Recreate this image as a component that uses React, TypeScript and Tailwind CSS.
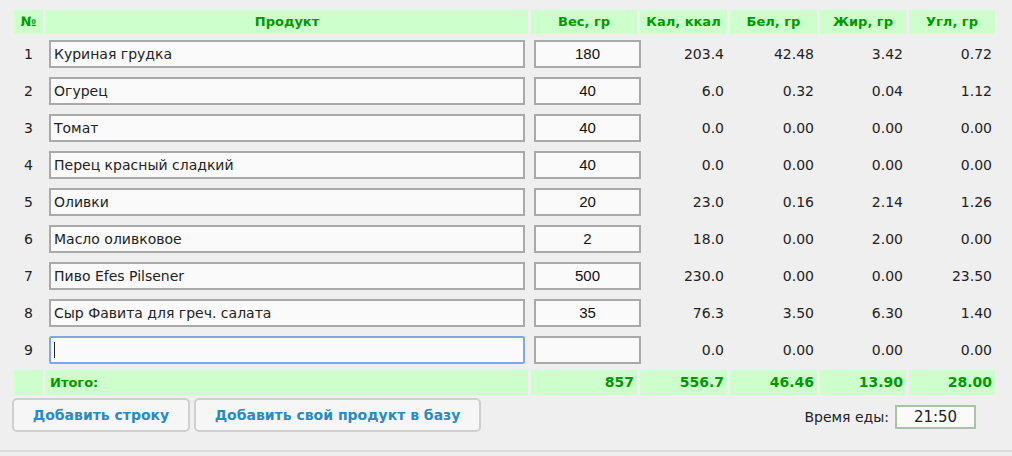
import React from "react";

const rows = [
  { n: 1, name: "Куриная грудка", w: "180", k: "203.4", b: "42.48", z: "3.42", u: "0.72" },
  { n: 2, name: "Огурец", w: "40", k: "6.0", b: "0.32", z: "0.04", u: "1.12" },
  { n: 3, name: "Томат", w: "40", k: "0.0", b: "0.00", z: "0.00", u: "0.00" },
  { n: 4, name: "Перец красный сладкий", w: "40", k: "0.0", b: "0.00", z: "0.00", u: "0.00" },
  { n: 5, name: "Оливки", w: "20", k: "23.0", b: "0.16", z: "2.14", u: "1.26" },
  { n: 6, name: "Масло оливковое", w: "2", k: "18.0", b: "0.00", z: "2.00", u: "0.00" },
  { n: 7, name: "Пиво Efes Pilsener", w: "500", k: "230.0", b: "0.00", z: "0.00", u: "23.50" },
  { n: 8, name: "Сыр Фавита для греч. салата", w: "35", k: "76.3", b: "3.50", z: "6.30", u: "1.40" },
  { n: 9, name: "", w: "", k: "0.0", b: "0.00", z: "0.00", u: "0.00" },
];

const font = { fontFamily: '"DejaVu Sans", Verdana, sans-serif' };
const arial = { fontFamily: '"Liberation Sans", Arial, sans-serif' };

const head = "h-[24px] bg-[#ccffcc] text-[#009900] font-bold text-[13px] flex items-center justify-center";
const tot = "h-[25px] bg-[#ccffcc] text-[#009900] font-bold text-[14px] flex items-center justify-end pr-[3px]";
const num = "h-[34px] flex items-center justify-end pr-[3px]";

export default function App() {
  return (
    <div className="w-[1012px] h-[456px] bg-[#efefef] text-[14px] text-[#222]" style={font}>
      <div className="h-[452px] border-b-[2px] border-[#dcdcdc] pt-[10px] pl-[14px]">
        <div className="grid grid-cols-[29px_482px_106px_87px_87px_86px_86px] gap-[3px]">
          <div className={head}>№</div>
          <div className={head}>Продукт</div>
          <div className={head}>Вес, гр</div>
          <div className={head}>Кал, ккал</div>
          <div className={head}>Бел, гр</div>
          <div className={head}>Жир, гр</div>
          <div className={head}>Угл, гр</div>
          {rows.map((r) => (
            <React.Fragment key={r.n}>
              <div className="h-[34px] flex items-center justify-center">{r.n}</div>
              <div className="h-[34px] flex items-center pl-[3px]">
                <div
                  className={
                    "w-[476px] h-[28px] bg-[#fafafa] flex items-center pl-[3px] " +
                    (r.n === 9
                      ? "border-[2px] border-[#7fa6e8] rounded-[2px]"
                      : "border-[2px] border-[#a9a9a9]")
                  }
                >
                  {r.n === 9 ? <span className="w-[1px] h-[16px] bg-[#222]" /> : r.name}
                </div>
              </div>
              <div className="h-[34px] flex items-center pl-[3px] overflow-visible">
                <div
                  className="shrink-0 w-[107px] h-[28px] bg-[#fafafa] border-[2px] border-[#a9a9a9] flex items-center justify-center text-[15px] text-[#111]"
                  style={arial}
                >
                  {r.w}
                </div>
              </div>
              <div className={num}>{r.k}</div>
              <div className={num}>{r.b}</div>
              <div className={num}>{r.z}</div>
              <div className={num}>{r.u}</div>
            </React.Fragment>
          ))}
          <div className="h-[25px] bg-[#ccffcc]" />
          <div className="h-[25px] bg-[#ccffcc] text-[#009900] font-bold text-[13px] flex items-center pl-[4px]">Итого:</div>
          <div className={tot}>857</div>
          <div className={tot}>556.7</div>
          <div className={tot}>46.46</div>
          <div className={tot}>13.90</div>
          <div className={tot}>28.00</div>
        </div>
        <div className="flex items-center mt-[3px] -ml-[2px] w-[964px]">
          <button className="h-[34px] w-[178px] bg-[#f6f6f6] border-[2px] border-[#cfcfcf] rounded-[5px] text-[#2b8ac0] font-bold text-[14px]">
            Добавить строку
          </button>
          <button className="ml-[4px] h-[34px] w-[287px] bg-[#f6f6f6] border-[2px] border-[#cfcfcf] rounded-[5px] text-[#2b8ac0] font-bold text-[14px]">
            Добавить свой продукт в базу
          </button>
          <div className="ml-auto flex items-center pt-[4px]">
            <span className="text-[14px] text-[#222]">Время еды:</span>
            <div className="ml-[6px] w-[81px] h-[24px] bg-[#fafafa] border-[2px] border-[#a8c4a8] flex items-center justify-center text-[15px]">
              21:50
            </div>
          </div>
        </div>
      </div>
    </div>
  );
}
